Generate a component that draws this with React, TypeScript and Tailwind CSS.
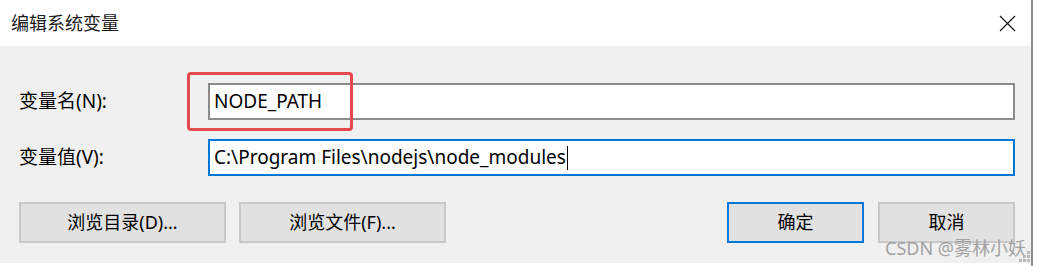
import React from 'react';

const font = { fontFamily: '"Noto Sans", "Noto Sans CJK SC", sans-serif' };

function CloseIcon() {
  return (
    <svg width="17" height="17" viewBox="0 0 17 17" fill="none">
      <path d="M1 1L16 16M16 1L1 16" stroke="#1a1a1a" strokeWidth="1.3" />
    </svg>
  );
}

function ResizeGrip() {
  const dots = [
    [8, 0],
    [4, 4],
    [8, 4],
    [0, 8],
    [4, 8],
    [8, 8],
  ];
  return (
    <svg width="11" height="11" viewBox="0 0 11 11">
      {dots.map(([x, y]) => (
        <rect key={`${x}-${y}`} x={x} y={y} width="3" height="3" fill="#b9b9b9" />
      ))}
    </svg>
  );
}

function DialogButton({ label, primary }: { label: string; primary?: boolean }) {
  return (
    <button
      className={`w-full h-[41px] bg-[#e1e1e1] text-[18px] text-black flex items-center justify-center ${
        primary ? 'border-2 border-[#0078d7]' : 'border-2 border-[#c8c8c8]'
      }`}
    >
      {label}
    </button>
  );
}

export default function App() {
  return (
    <div className="w-[1038px] h-[266px] flex bg-white overflow-hidden" style={font}>
      <div className="w-[1031px] flex flex-col relative">
        {/* Title bar */}
        <div className="h-[46px] bg-white flex items-center justify-between pl-[11px] pr-[15px]">
          <span className="text-[18px] text-[#1a1a1a] leading-none">编辑系统变量</span>
          <CloseIcon />
        </div>

        {/* Body */}
        <div className="flex-1 bg-[#f0f0f0] pl-[19px] pr-[16px] pt-[37px]">
          <div className="flex items-center">
            <label className="w-[189px] text-[19px] text-black">变量名(N):</label>
            <div className="relative">
              <div className="w-[807px] h-[37px] bg-white border-2 border-[#8c8c8c] flex items-center pl-[4px] text-[19px] text-black">
                NODE_PATH
              </div>
              <div className="absolute left-[-21px] top-[-11px] w-[166px] h-[59px] border-[3px] border-[#e5484d] rounded-[4px]" />
            </div>
          </div>

          <div className="flex items-center mt-[19px]">
            <label className="w-[189px] text-[19px] text-black">变量值(V):</label>
            <div className="w-[807px] h-[37px] bg-white border-2 border-[#0078d7] flex items-center pl-[4px] text-[19px] text-black">
              <span>C:\Program Files\nodejs\node_modules</span>
              <span className="w-[1.5px] h-[24px] bg-black ml-[1px]" />
            </div>
          </div>

          <div className="flex items-center mt-[26px]">
            <div className="flex gap-[13px]">
              <div className="w-[207px]">
                <DialogButton label="浏览目录(D)..." />
              </div>
              <div className="w-[207px]">
                <DialogButton label="浏览文件(F)..." />
              </div>
            </div>
            <div className="flex-1" />
            <div className="flex gap-[14px]">
              <div className="w-[137px]">
                <DialogButton label="确定" primary />
              </div>
              <div className="w-[137px]">
                <DialogButton label="取消" />
              </div>
            </div>
          </div>
        </div>
        <div className="h-[3px] bg-white" />

        {/* Watermark */}
        <div className="absolute right-[5px] bottom-[9px] text-[18px] text-[#9a9a9a] opacity-90 leading-none">
          CSDN @雾林小妖
        </div>
        <div className="absolute right-[1px] bottom-[4px]">
          <ResizeGrip />
        </div>
      </div>
      <div className="w-[2px] bg-[#8a8a8a]" />
      <div className="flex-1 bg-white" />
    </div>
  );
}
